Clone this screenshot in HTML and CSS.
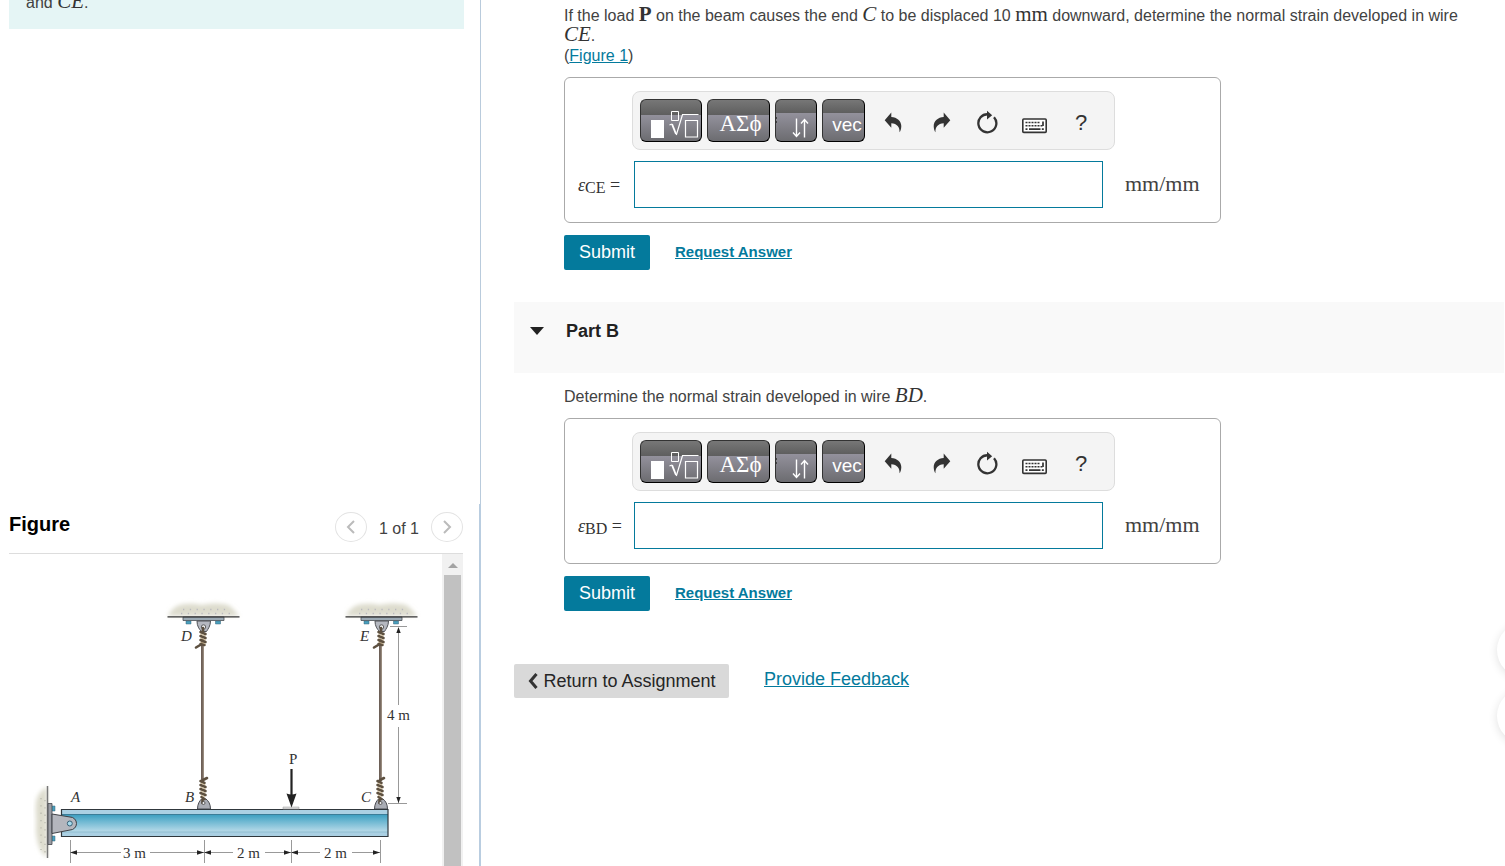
FILE: index.html
```html
<!DOCTYPE html>
<html lang="en">
<head>
<meta charset="utf-8">
<title>Normal strain</title>
<link rel="stylesheet" href="styles.css">
</head>
<body>
<svg class="defs" width="0" height="0" aria-hidden="true">
  <defs>
    <symbol id="i-root" viewBox="0 0 60 41">
      <rect x="10" y="20" width="13" height="18" fill="#fff"/>
      <g fill="none" stroke="#fff">
        <path d="M30.500 11.500h7v9h-7z"/>
        <path stroke-width="1.300" d="M28.500 25l2.500-1"/>
        <path stroke-width="1.900" d="M31 24l4 10"/>
        <path stroke-width="1.200" d="M35.300 35L41.500 14.500h16"/>
        <path stroke-width="1.200" d="M44.500 20.500h12v16.500h-12z"/>
      </g>
    </symbol>
    <symbol id="i-arrows" viewBox="0 0 40 41">
      <path d="M0 17h1v2H0zM0 21h1v2H0z" fill="#444"/>
      <path fill="none" stroke="#fff" stroke-width="1.400" d="M20.500 18.500v18M17 32.500l3.500 4 3.500-4M28.500 37.500v-18M25 23.500l3.500-4 3.500 4"/>
    </symbol>
    <symbol id="i-undo" viewBox="0 0 27 27">
      <path transform="translate(4 5)" d="M.7 8.200L7.300.500V5C13 5.300 17.300 9 17.300 14c0 3-.8 5-1.800 6.300C16 15.500 13 11.600 7.300 11.300v4.400z"/>
    </symbol>
    <symbol id="i-redo" viewBox="0 0 27 27">
      <path transform="translate(24 5) scale(-1 1)" d="M.7 8.200L7.300.500V5C13 5.300 17.300 9 17.300 14c0 3-.8 5-1.800 6.300C16 15.500 13 11.600 7.300 11.300v4.400z"/>
    </symbol>
    <symbol id="i-reset" viewBox="0 0 27 27">
      <path fill="none" stroke="#333" stroke-width="2.300" d="M14 7.300A9 9 0 1 0 20 10.200"/>
      <path d="M13 3.800l5.200 4.400-5.200 4.300z"/>
    </symbol>
    <symbol id="i-keys" viewBox="0 0 27 27">
      <rect x="1.800" y="12" width="23.400" height="13.400" rx="1" fill="#fff" stroke="#333" stroke-width="1.600"/>
      <path fill="none" stroke="#333" stroke-width="1.600" stroke-dasharray="2 1" d="M4.500 15.500h15M4.500 18.700h17"/>
      <path fill="none" stroke="#333" stroke-width="1.700" d="M22 14.500v4.500M4.500 22.200h2M8 22.200h11.500M20.800 22.200h2"/>
    </symbol>
    <symbol id="i-left" viewBox="0 0 10 14"><path fill="none" stroke="#bbb" stroke-width="2" d="M8 1L2 7l6 6"/></symbol>
    <symbol id="i-right" viewBox="0 0 10 14"><path fill="none" stroke="#bbb" stroke-width="2" d="M2 1l6 6-6 6"/></symbol>
  </defs>
</svg>

<div class="page">
  <aside class="side">
    <div class="hint">and <i class="math">CE</i>.</div>
    <section class="figure">
      <header class="figure-head">
        <h2>Figure</h2>
        <div class="pager">
          <button type="button" class="round" aria-label="Previous"><svg width="10" height="14"><use href="#i-left"/></svg></button>
          <span>1 of 1</span>
          <button type="button" class="round" aria-label="Next"><svg width="10" height="14"><use href="#i-right"/></svg></button>
        </div>
      </header>
      <div class="figure-body">
        <svg class="diagram" width="433" height="312" viewBox="9 554 433 312" role="img" aria-label="Beam held by two wires">
          <defs>
            <linearGradient id="web" x1="0" y1="0" x2="0" y2="1">
              <stop offset="0" stop-color="#3b9dbf"/><stop offset=".25" stop-color="#5cafcc"/><stop offset="1" stop-color="#badbe9"/>
            </linearGradient>
            <filter id="soft" x="-20%" y="-40%" width="140%" height="180%"><feGaussianBlur stdDeviation="2"/></filter>
            <g id="ceiling">
              <path filter="url(#soft)" fill="#dddccd" d="M168 616c2-5 6-9 12-11 10-2 14-1 22 0 10-2 17-2 26 0 5 3 8 7 11 11z"/>
              <path fill="none" stroke="#bbbabf" stroke-width="1.300" stroke-dasharray="1.300 5.500" d="M183 609.500h45M181 613.500h52"/>
              <path fill="#9caab4" stroke="#4b5055" stroke-width=".8" d="M183 617h41v3.500h-41z"/>
              <path stroke="#333" stroke-width="1.300" d="M167.500 616.800h72"/>
              <path fill="#4aa0be" stroke="#39647a" stroke-width=".5" d="M186 621h5v3h-5zM215.500 621h5v3h-5z"/>
              <path fill="#b5b8c0" stroke="#505257" d="M197 621h13.500c0 5-2.500 8-4 10.500h-5c-2.500-2.500-4.500-5.500-4.500-10.500z"/>
              <circle cx="203.500" cy="627" r="2.200" fill="#eee" stroke="#444" stroke-width=".8"/>
            </g>
            <g id="wire" fill="none" stroke-linecap="round">
              <path stroke="#6d6057" stroke-width="3" d="M202.500 640v140"/>
              <path stroke="#a39789" stroke-width="1" d="M203.300 640v140"/>
              <path stroke="#5d5040" stroke-width="2.600" d="M203 628v3M200.500 632l5 2M200.500 636l5 2M200.500 640l5 2M200.500 644l4 1M196 647.500l5-3"/>
              <path stroke="#c1ab82" stroke-width=".8" d="M200.500 634l5 2M200.500 638l5 2M200.500 642l5 2"/>
            </g>
            <g id="clevis" fill="none">
              <path fill="#aaadb5" stroke="#484a50" d="M197.500 809c0-5 2-8 4-10h4.500c2.500 2 4.500 5 4.500 10z"/>
              <path stroke="#5d5040" stroke-width="2.600" stroke-linecap="round" d="M203 780l4-2M200.500 781l4 2M200.500 785l5 2M200.500 789l5 2M200.500 793l5 2M201.500 797l3 2M202.500 800v3"/>
              <path stroke="#c1ab82" stroke-width=".8" d="M200.500 783l5 2M200.500 787l5 2M200.500 791l5 2M201 795l4 2"/>
              <circle cx="203.500" cy="803" r="1.500" fill="#eee" stroke="#333" stroke-width=".7"/>
            </g>
            <path id="tip" d="M0 0l7-2.200v4.400z"/>
          </defs>
          <use href="#ceiling"/><use href="#ceiling" x="178"/>
          <use href="#wire"/><use href="#wire" x="178"/>
          <use href="#clevis"/><use href="#clevis" x="177"/>
          <path filter="url(#soft)" fill="#dddccd" d="M47 787c-6 3-10 8-11 16-1 10 1 16 0 25 0 13 4 26 11 29z"/>
          <path fill="none" stroke="#bbbab0" stroke-width="1.300" stroke-dasharray="1.300 6" d="M41 798v52M45 800v54"/>
          <path stroke="#777" stroke-width="1.500" d="M47.500 786v72"/>
          <path fill="#abd0e3" d="M61.500 809.500h326.500v27h-326.500z"/>
          <path fill="url(#web)" d="M62 814.500h326v17.500h-326z"/>
          <path stroke="#3b7d98" d="M62 814.500h326"/><path stroke="#8fbdd1" d="M62 832h326"/>
          <path fill="none" stroke="#30373c" stroke-width="1.200" d="M61.500 809.500h326.500v27h-326.500z"/>
          <path fill="#4aa0be" stroke="#39647a" stroke-width=".5" d="M51 806h4v5h-4zM51 836h4v5h-4z"/>
          <path fill="#9b9da4" stroke="#42454a" stroke-width=".8" d="M48 803.500h4v41h-4z"/>
          <path fill="#b4b6bd" stroke="#3f4146" d="M52 814l18 3a6.500 6.500 0 0 1 0 13l-18 3.500z"/>
          <circle cx="69.800" cy="823.500" r="2.500" fill="#a7dbed" stroke="#376176"/>
          <path fill="#ddd" stroke="#999" stroke-width=".5" d="M283 807h16v2h-16z"/>
          <path stroke="#222" stroke-width="2.200" d="M291.500 769v27"/><path fill="#222" d="M286.500 793.500q5 2 10 0l-5 14z"/>
          <g stroke="#999" fill="none" stroke-width="1">
            <path d="M390 626.500h17M388 803.500h19M398.500 630v75M398.500 727v76"/>
            <path d="M70.500 840v23M204.500 840v23M291.500 840v23M380.500 840v23"/>
            <path d="M72 852.500h49M150 852.500h83M265 852.500h55M352 852.500h28"/>
          </g>
          <g fill="#222">
            <use href="#tip" x="70" y="852.500"/><use href="#tip" x="204" y="852.500"/><use href="#tip" x="291" y="852.500"/>
            <path d="M204 852.500l-7-2.200v4.400zM291 852.500l-7-2.200v4.400zM380 852.500l-7-2.200v4.400zM398.500 627l-2.200 6h4.400zM398.500 803l-2.200-6h4.400z"/>
          </g>
          <g class="labels">
            <g font-style="italic"><text x="71" y="802">A</text><text x="185" y="802">B</text><text x="361" y="802">C</text><text x="181" y="641">D</text><text x="360" y="641">E</text></g>
            <text x="289" y="764">P</text><text x="387" y="720">4 m</text><text x="123" y="858">3 m</text><text x="237" y="858">2 m</text><text x="324" y="858">2 m</text>
          </g>
        </svg>
        <div class="scroll"><svg width="10" height="5" viewBox="0 0 10 5"><path d="M0 5l5-5 5 5z" fill="#a3a3a3"/></svg><div class="thumb"></div></div>
      </div>
    </section>
  </aside>

  <main class="main">
    <section class="part part-a">
      <p>If the load <b class="math">P</b> on the beam causes the end <i class="math">C</i> to be displaced 10 <span class="math">mm</span> downward, determine the normal strain developed in wire <i class="math">CE</i>.<br>(<a href="#">Figure 1</a>)</p>
      <form class="answer">
        <div class="tools">
          <button type="button" class="key wide root" aria-label="Templates"><svg width="60" height="41"><use href="#i-root"/></svg></button>
          <button type="button" class="key wide greek">ΑΣϕ</button>
          <button type="button" class="key" aria-label="Arrows"><svg width="40" height="41"><use href="#i-arrows"/></svg></button>
          <button type="button" class="key vec">vec</button>
          <button type="button" class="tool" aria-label="Undo"><svg width="27" height="27"><use href="#i-undo"/></svg></button>
          <button type="button" class="tool" aria-label="Redo"><svg width="27" height="27"><use href="#i-redo"/></svg></button>
          <button type="button" class="tool" aria-label="Reset"><svg width="27" height="27"><use href="#i-reset"/></svg></button>
          <button type="button" class="tool" aria-label="Keyboard"><svg width="27" height="27"><use href="#i-keys"/></svg></button>
          <button type="button" class="tool help">?</button>
        </div>
        <label for="ce"><i>ε</i><span class="sub">CE</span> =</label>
        <input id="ce" type="text">
        <span class="unit">mm/mm</span>
      </form>
      <div class="actions"><button type="button" class="submit">Submit</button><a href="#">Request Answer</a></div>
    </section>

    <header class="part-head"><svg width="14" height="8" viewBox="0 0 14 8"><path d="M0 0h14L7 8z" fill="#222"/></svg><h2>Part B</h2></header>

    <section class="part part-b">
      <p>Determine the normal strain developed in wire <i class="math">BD</i>.</p>
      <form class="answer">
        <div class="tools">
          <button type="button" class="key wide root" aria-label="Templates"><svg width="60" height="41"><use href="#i-root"/></svg></button>
          <button type="button" class="key wide greek">ΑΣϕ</button>
          <button type="button" class="key" aria-label="Arrows"><svg width="40" height="41"><use href="#i-arrows"/></svg></button>
          <button type="button" class="key vec">vec</button>
          <button type="button" class="tool" aria-label="Undo"><svg width="27" height="27"><use href="#i-undo"/></svg></button>
          <button type="button" class="tool" aria-label="Redo"><svg width="27" height="27"><use href="#i-redo"/></svg></button>
          <button type="button" class="tool" aria-label="Reset"><svg width="27" height="27"><use href="#i-reset"/></svg></button>
          <button type="button" class="tool" aria-label="Keyboard"><svg width="27" height="27"><use href="#i-keys"/></svg></button>
          <button type="button" class="tool help">?</button>
        </div>
        <label for="bd"><i>ε</i><span class="sub">BD</span> =</label>
        <input id="bd" type="text">
        <span class="unit">mm/mm</span>
      </form>
      <div class="actions"><button type="button" class="submit">Submit</button><a href="#">Request Answer</a></div>
    </section>

    <footer class="foot">
      <button type="button" class="return"><svg width="11" height="16" viewBox="0 0 11 16"><path fill="none" stroke="#333" stroke-width="3" d="M9.500 1L3.500 8l6 7"/></svg>Return to Assignment</button>
      <a href="#">Provide Feedback</a>
    </footer>
  </main>
  <div class="bubbles"><span></span><span></span></div>
</div>
</body>
</html>
```

FILE: styles.css
```css
* { box-sizing: border-box; }
body {
  margin: 0;
  font: 16px/20px "Liberation Sans", Arial, sans-serif;
  color: #424242;
  background: #fff;
}
h2, p { margin: 0; }
a { color: #047a9c; }
button { font: inherit; color: inherit; border: 0; padding: 0; background: none; }
svg { display: block; }
.defs { position: absolute; }
.math { font-family: "Liberation Serif", serif; font-size: 21px; line-height: 16px; color: #333; }

.page { position: relative; display: flex; height: 100vh; overflow: hidden; }

.side {
  flex: 0 0 481px;
  display: flex;
  flex-direction: column;
  justify-content: space-between;
  background: linear-gradient(#b9cbdc, #b9cbdc) right / 1px 100% no-repeat;
}
.hint {
  margin: -7px 17px 0 9px;
  padding: 0 17px 16px;
  background: #e5f5f5;
}
.figure { padding: 0 16px 0 9px; border-right: 2px solid #b9cde0; }
.figure-head {
  display: flex;
  justify-content: space-between;
  align-items: center;
  height: 50px;
  padding-bottom: 4px;
  border-bottom: 1px solid #ddd;
}
.figure-head h2 { font-size: 20px; line-height: 24px; color: #000; padding-bottom: 6px; }
.pager { display: flex; align-items: center; gap: 12px; }
.pager span { padding-top: 4px; }
.round {
  display: grid;
  place-items: center;
  width: 32px;
  height: 30px;
  border: 1px solid #e3e3e3;
  border-radius: 50%;
}
.figure-body { display: flex; justify-content: space-between; }
.labels { font-family: "Liberation Serif", serif; font-size: 15px; fill: #333; }
.scroll {
  display: flex;
  flex-direction: column;
  align-items: center;
  gap: 7px;
  width: 21px;
  padding-top: 9px;
  background: #f1f1f1;
}
.thumb { flex: 1; width: 17px; background: #c1c1c1; }

.main { flex: 1; min-width: 0; padding-left: 33px; }
.part { padding: 0 24px 0 50px; }
.part-a { padding-top: 6px; }
.part-b { padding-top: 14px; }
.answer {
  display: grid;
  grid-template-columns: 54px 471px auto;
  row-gap: 11px;
  align-items: center;
  width: 657px;
  max-width: 100%;
  margin-top: 11px;
  padding: 13px 12px 14px 13px;
  border: 1px solid #aaa;
  border-radius: 6px;
}
.tools {
  grid-column: 2 / 4;
  display: flex;
  gap: 5px;
  width: 483px;
  padding: 7px;
  border: 1px solid #ddd;
  border-radius: 8px;
  background: #f4f4f4;
}
.key {
  width: 42px;
  height: 43px;
  border: 1px solid #333;
  border-right-color: #000;
  border-bottom-color: #000;
  border-radius: 6px;
  color: #fff;
  background: linear-gradient(#777, #5e5e5e 13px, #93919c 13px, #6c6c70);
}
.key.wide { width: 63px; background: linear-gradient(#777, #5e5e5e 15px, #93919c 15px, #6c6c70); }
.key.root { width: 62px; }
.greek { font: 23px/24px "Liberation Serif", serif; padding: 6px 0 0 4px; }
.key.vec { width: 43px; margin-right: 2px; font-size: 19px; padding: 8px 0 0 7px; }
.tool { display: grid; place-items: center; width: 42px; height: 43px; font-size: 22px; fill: #333; color: #333; }
.help { padding-top: 4px; }
.answer label { font-family: "Liberation Serif", serif; font-size: 18px; white-space: nowrap; color: #333; padding-top: 4px; }
.sub { font-size: 16px; vertical-align: -2px; }
.answer input {
  width: 469px;
  height: 47px;
  margin-left: 2px;
  padding: 0 8px;
  border: 1px solid #047a9c;
  font: inherit;
}
.unit { font: 22px/24px "Liberation Serif", serif; padding: 0 0 2px 22px; }
.actions { display: flex; align-items: center; gap: 25px; margin-top: 12px; }
.actions a { font-size: 15px; font-weight: bold; padding-bottom: 2px; }
.submit {
  width: 86px;
  height: 35px;
  padding-bottom: 2px;
  border-radius: 2px;
  background: #047a9c;
  color: #fff;
  font-size: 18px;
}
.part-head {
  display: flex;
  align-items: center;
  gap: 22px;
  height: 71px;
  margin: 32px 1px 0 0;
  padding: 0 16px 14px;
  background: #f9f9f9;
}
.part-head h2 { font-size: 18px; line-height: 20px; color: #222; }
.foot { display: flex; align-items: center; gap: 35px; margin-top: 53px; }
.foot a { font-size: 18px; padding-bottom: 4px; }
.return {
  display: flex;
  align-items: center;
  justify-content: center;
  gap: 5px;
  width: 215px;
  height: 34px;
  border-radius: 2px;
  background: #d9d9d9;
  color: #252525;
  font-size: 18px;
}
.bubbles {
  position: absolute;
  top: 622px;
  right: -48px;
  display: grid;
  gap: 10px;
}
.bubbles span {
  width: 56px;
  height: 56px;
  border-radius: 50%;
  background: #fff;
  box-shadow: 0 2px 10px rgba(0, 0, 0, .12);
}
```
